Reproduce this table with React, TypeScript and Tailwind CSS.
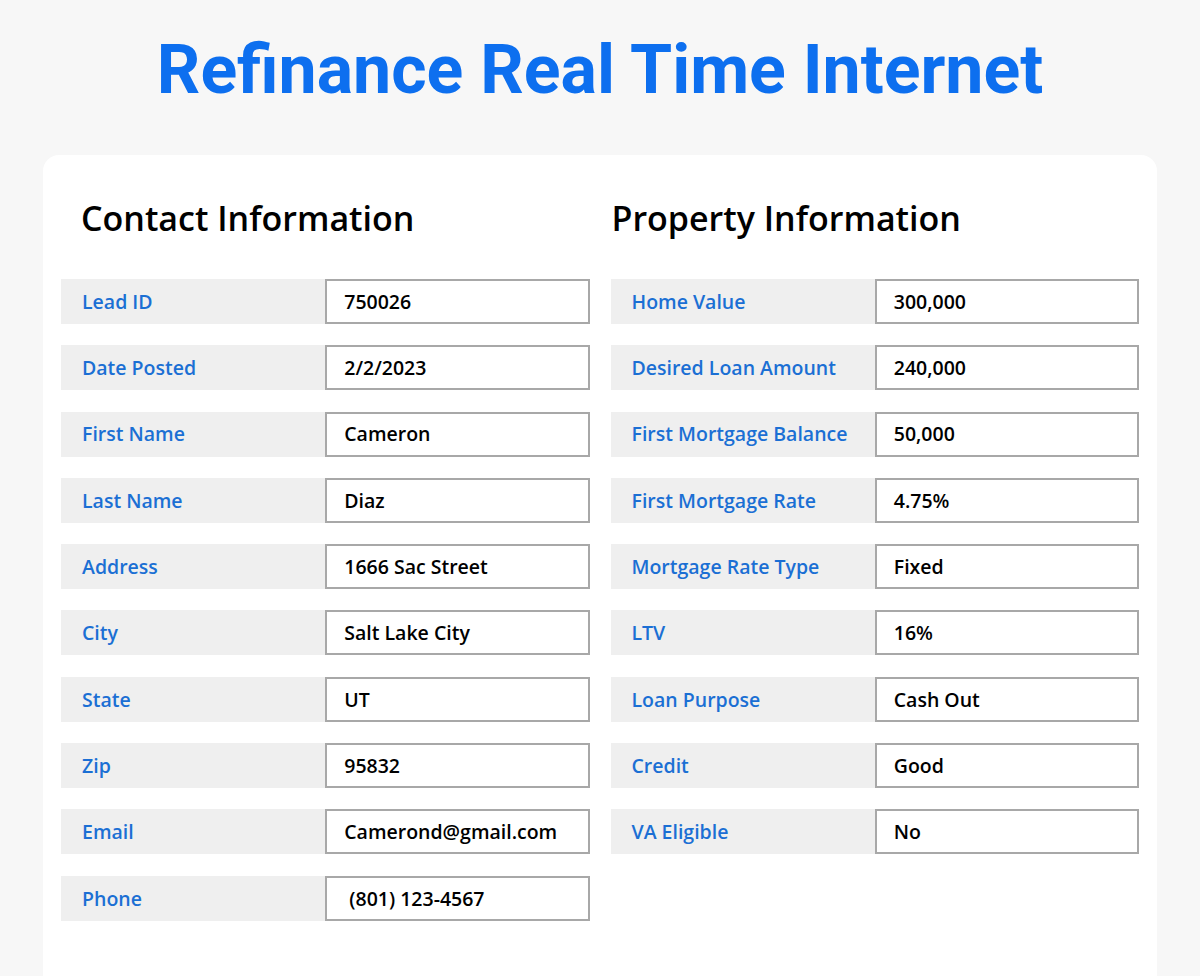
const contact: [string, string][] = [
  ['Lead ID', '750026'],
  ['Date Posted', '2/2/2023'],
  ['First Name', 'Cameron'],
  ['Last Name', 'Diaz'],
  ['Address', '1666 Sac Street'],
  ['City', 'Salt Lake City'],
  ['State', 'UT'],
  ['Zip', '95832'],
  ['Email', 'Camerond@gmail.com'],
  ['Phone', '\u00a0(801) 123-4567'],
];

const property: [string, string][] = [
  ['Home Value', '300,000'],
  ['Desired Loan Amount', '240,000'],
  ['First Mortgage Balance', '50,000'],
  ['First Mortgage Rate', '4.75%'],
  ['Mortgage Rate Type', 'Fixed'],
  ['LTV', '16%'],
  ['Loan Purpose', 'Cash Out'],
  ['Credit', 'Good'],
  ['VA Eligible', 'No'],
];

function Section({ title, rows, indent }: { title: string; rows: [string, string][]; indent?: boolean }) {
  return (
    <div className="flex flex-col">
      <h2 className={indent ? 'ml-5 h-10 text-[34px] leading-10 font-semibold text-black' : 'ml-px h-10 text-[34px] leading-10 font-semibold text-black'}>
        {title}
      </h2>
      <div className="mt-[41px] flex flex-col gap-[21.3px]">
        {rows.map(([label, value]) => (
          <div key={label} className="grid h-[45px] grid-cols-2">
            <div className="flex items-center bg-[#efefef] pl-[21px] text-[19.5px] font-semibold text-[#1b6fd4]">
              {label}
            </div>
            <div className="flex items-center border-2 border-[#a8a8a8] bg-white pl-[17px] text-[19.5px] font-semibold text-black">
              {value}
            </div>
          </div>
        ))}
      </div>
    </div>
  );
}

export default function App() {
  return (
    <div className="h-[976px] overflow-hidden bg-[#f7f7f7] font-['Open_Sans',sans-serif]">
      <h1 className="pt-[26px] text-center font-['Roboto',sans-serif] text-[68px] leading-[88px] font-bold text-[#0d6fef]">
        Refinance Real Time Internet
      </h1>
      <div className="mx-[43px] mt-[41px] h-[900px] rounded-2xl bg-white px-[18px] pt-[43px]">
        <div className="grid grid-cols-2 gap-[21px]">
          <Section title="Contact Information" rows={contact} indent />
          <Section title="Property Information" rows={property} />
        </div>
      </div>
    </div>
  );
}
